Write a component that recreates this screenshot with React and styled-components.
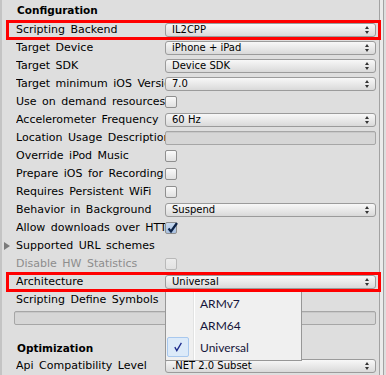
import React from 'react';
import styled, { createGlobalStyle, css } from 'styled-components';

const GlobalStyle = createGlobalStyle`
  html, body { margin: 0; padding: 0; background: #dedede; }
  body { font-family: "DejaVu Sans", Verdana, sans-serif; font-size: 11px; color: #000; }
`;

const Window = styled.div`
  display: flex;
  width: 386px;
  height: 375px;
  overflow: hidden;
  background: #dedede;
  box-sizing: border-box;
  border-left: 2px solid #c4c4c4;
`;

const Inspector = styled.div`
  flex: 1;
  display: flex;
  flex-direction: column;
  padding: 1px 3px 0 0;
  min-width: 0;
`;

const Scrollbar = styled.div`
  width: 7px;
  display: flex;
`;

const Track = styled.div`
  width: 3px;
  background: #ebebeb;
  border-left: 1px solid #a2a2a2;
  border-right: 1px solid #a2a2a2;
`;

const SectionHeader = styled.div`
  height: 18px;
  line-height: 18px;
  padding-left: 15px;
  font-weight: bold;
  font-size: 10.5px;
  word-spacing: 1px;
  margin-top: ${p => p.$gap || 0}px;
  margin-bottom: ${p => p.$after || 0}px;
`;

const Row = styled.div`
  display: grid;
  grid-template-columns: 149px 1fr;
  align-items: center;
  height: 18px;
  padding-left: 14px;
  ${p => p.$highlight && css`
    position: relative;
    &::after {
      content: '';
      position: absolute;
      left: 4px;
      right: -5px;
      top: -1px;
      bottom: -1px;
      border: 3px solid #ff0000;
      z-index: 11;
      pointer-events: none;
    }
  `}
`;

const FullRow = styled.div`
  display: flex;
  align-items: center;
  height: 18px;
  padding-left: 12px;
`;

const Label = styled.div`
  white-space: nowrap;
  overflow: hidden;
  line-height: 18px;
  word-spacing: 2px;
  color: ${p => (p.$disabled ? '#8d8d8d' : '#000')};
  display: flex;
  align-items: center;
  margin-left: ${p => (p.$foldout ? -12 : 0)}px;
`;

const Foldout = styled.span`
  width: 0;
  height: 0;
  border-top: 4px solid transparent;
  border-bottom: 4px solid transparent;
  border-left: 6px solid #7b7b7b;
  margin-right: 6px;
  flex: none;
`;

const Popup = styled.div`
  position: relative;
  height: 14px;
  box-sizing: border-box;
  border: 1px solid #9b9b9b;
  border-radius: 3px;
  background: linear-gradient(#f8f8f8, #e9e9e9 50%, #d9d9d9);
  font-size: 10px;
  line-height: 12px;
  padding-left: 6px;
  white-space: nowrap;
  overflow: hidden;
`;

const PopupArrows = styled.svg`
  position: absolute;
  right: 6px;
  top: 2px;
`;

const Checkbox = styled.div`
  position: relative;
  width: 12px;
  height: 12px;
  box-sizing: border-box;
  border: 1px solid ${p => (p.$disabled ? '#b9b9b9' : '#8f8f8f')};
  border-radius: 2px;
  background: ${p =>
    p.$checked
      ? 'linear-gradient(#c9daf0, #a8c0e0)'
      : p.$disabled
      ? 'linear-gradient(#ececec, #e2e2e2)'
      : 'linear-gradient(#fafafa, #e0e0e0)'};
`;

const CheckMark = styled.svg`
  position: absolute;
  left: 0px;
  top: -3px;
  overflow: visible;
`;

const TextField = styled.div`
  height: 14px;
  box-sizing: border-box;
  border: 1px solid #a6a6a6;
  border-radius: 2px;
  background: #d6d6d6;
  box-shadow: inset 0 1px 0 #c8c8c8;
  flex: ${p => (p.$grow ? 1 : 'initial')};
`;

const Menu = styled.div`
  position: absolute;
  left: 163px;
  top: calc(100% - 1px);
  width: 137px;
  box-sizing: border-box;
  border: 1px solid #979797;
  background: linear-gradient(to right, #f0f0f0 27px, #e2e3e3 27px, #e2e3e3 28px, #ffffff 28px, #ffffff 29px, #f0f0f0 29px);
  padding: 1px 0 2px;
  z-index: 10;
  font-family: Lato, "Noto Sans", sans-serif;
  font-size: 12px;
`;

const MenuItem = styled.div`
  display: flex;
  align-items: center;
  height: 22px;
`;

const CheckCell = styled.div`
  width: 22px;
  height: 20px;
  margin: 0 11px 0 1px;
  box-sizing: border-box;
  border-radius: 2px;
  display: flex;
  align-items: center;
  justify-content: center;
  ${p => p.$active && css`
    background: #dceaf9;
    border: 1px solid #a8c8ee;
  `}
`;

const MenuText = styled.span`
  color: #15153a;
`;

const Arrows = () => (
  <PopupArrows width="4" height="8" viewBox="0 0 4 8">
    <path d="M2 0 L4 3 L0 3 Z M0 5 L4 5 L2 8 Z" fill="#333" />
  </PopupArrows>
);

const PopupField = ({ children }) => (
  <Popup>
    {children}
    <Arrows />
  </Popup>
);

const Check = ({ checked, disabled }) => (
  <Checkbox $checked={checked} $disabled={disabled}>
    {checked && (
      <CheckMark width="12" height="14" viewBox="0 0 12 14">
        <path d="M2.5 8.5 L5 11.5 L11 3" stroke="#0d2347" strokeWidth="2.2" fill="none" />
      </CheckMark>
    )}
  </Checkbox>
);

const ArchMenu = () => (
  <Menu>
    {['ARMv7', 'ARM64', 'Universal'].map(item => (
      <MenuItem key={item}>
        <CheckCell $active={item === 'Universal'}>
          {item === 'Universal' && (
            <svg width="8" height="10" viewBox="0 0 8 10">
              <path d="M0.8 5.2 L2.8 8.6 L7.4 0.8" stroke="#1c2a8c" strokeWidth="1.3" fill="none" />
            </svg>
          )}
        </CheckCell>
        <MenuText>{item}</MenuText>
      </MenuItem>
    ))}
  </Menu>
);

const rows = [
  { label: 'Scripting Backend', popup: 'IL2CPP', highlight: true },
  { label: 'Target Device', popup: 'iPhone + iPad' },
  { label: 'Target SDK', popup: 'Device SDK' },
  { label: 'Target minimum iOS Version', popup: '7.0' },
  { label: 'Use on demand resources', check: true },
  { label: 'Accelerometer Frequency', popup: '60 Hz' },
  { label: 'Location Usage Description', field: true },
  { label: 'Override iPod Music', check: true },
  { label: 'Prepare iOS for Recording', check: true },
  { label: 'Requires Persistent WiFi', check: true },
  { label: 'Behavior in Background', popup: 'Suspend' },
  { label: 'Allow downloads over HTTP (nonsecure)', check: true, checked: true },
  { label: 'Supported URL schemes', foldout: true },
  { label: 'Disable HW Statistics', check: true, disabled: true },
  { label: 'Architecture', popup: 'Universal', highlight: true, menu: true },
  { label: 'Scripting Define Symbols' },
];

export default function App() {
  return (
    <>
      <GlobalStyle />
      <Window>
        <Inspector>
          <SectionHeader $after={2}>Configuration</SectionHeader>
          {rows.map(r => (
            <Row key={r.label} $highlight={r.highlight}>
              <Label $disabled={r.disabled} $foldout={r.foldout}>
                {r.foldout && <Foldout />}
                {r.label}
              </Label>
              <div>
                {r.popup && <PopupField>{r.popup}</PopupField>}
                {r.check && <Check checked={r.checked} disabled={r.disabled} />}
                {r.field && <TextField />}
              </div>
              {r.menu && <ArchMenu />}
            </Row>
          ))}
          <FullRow>
            <TextField $grow />
          </FullRow>
          <SectionHeader $gap={12}>Optimization</SectionHeader>
          <Row>
            <Label>Api Compatibility Level</Label>
            <div>
              <PopupField>.NET 2.0 Subset</PopupField>
            </div>
          </Row>
        </Inspector>
        <Scrollbar>
          <Track />
        </Scrollbar>
      </Window>
    </>
  );
}
